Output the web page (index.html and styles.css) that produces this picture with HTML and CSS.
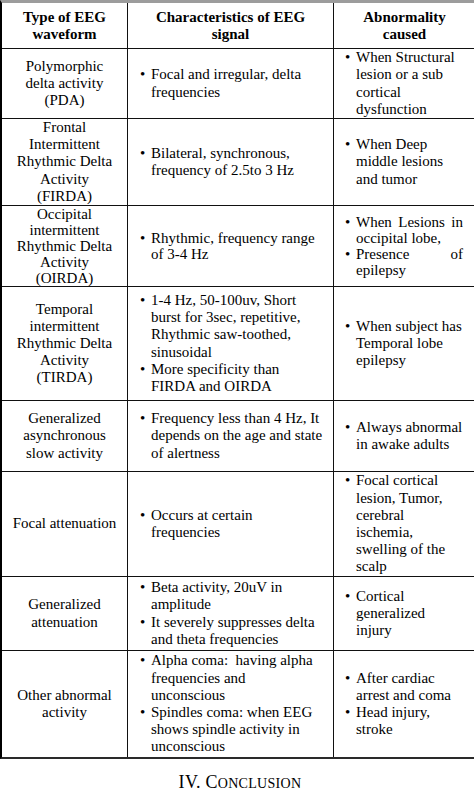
FILE: index.html
```html
<!DOCTYPE html>
<html lang="en">
<head>
<meta charset="utf-8">
<title>EEG waveforms</title>
<link rel="stylesheet" href="styles.css">
</head>
<body>
<table class="eeg">
  <colgroup>
    <col class="c-type">
    <col class="c-char">
    <col class="c-abn">
  </colgroup>
  <thead>
    <tr class="r-head">
      <th>Type of EEG<br>waveform</th>
      <th>Characteristics of EEG<br>signal</th>
      <th>Abnormality<br>caused</th>
    </tr>
  </thead>
  <tbody>
    <tr class="r1">
      <td class="type">Polymorphic<br>delta activity<br>(PDA)</td>
      <td class="char"><div class="item">Focal and irregular, delta<br>frequencies</div></td>
      <td class="abn"><div class="item">When Structural<br>lesion or a sub<br>cortical<br>dysfunction</div></td>
    </tr>
    <tr class="r2">
      <td class="type">Frontal<br>Intermittent<br>Rhythmic Delta<br>Activity<br>(FIRDA)</td>
      <td class="char"><div class="item">Bilateral, synchronous,<br>frequency of 2.5to 3 Hz</div></td>
      <td class="abn"><div class="item">When Deep<br>middle lesions<br>and tumor</div></td>
    </tr>
    <tr class="r3">
      <td class="type">Occipital<br>intermittent<br>Rhythmic Delta<br>Activity<br>(OIRDA)</td>
      <td class="char"><div class="item">Rhythmic, frequency range<br>of 3-4 Hz</div></td>
      <td class="abn justify"><div class="item">When Lesions in occipital lobe,</div><div class="item">Presence of epilepsy</div></td>
    </tr>
    <tr class="r4">
      <td class="type">Temporal<br>intermittent<br>Rhythmic Delta<br>Activity<br>(TIRDA)</td>
      <td class="char"><div class="item">1-4 Hz, 50-100uv, Short<br>burst for 3sec, repetitive,<br>Rhythmic saw-toothed,<br>sinusoidal</div><div class="item">More specificity than<br>FIRDA and OIRDA</div></td>
      <td class="abn"><div class="item">When subject has<br>Temporal lobe<br>epilepsy</div></td>
    </tr>
    <tr class="r5">
      <td class="type">Generalized<br>asynchronous<br>slow activity</td>
      <td class="char"><div class="item">Frequency less than 4 Hz, It<br>depends on the age and state<br>of alertness</div></td>
      <td class="abn"><div class="item">Always abnormal<br>in awake adults</div></td>
    </tr>
    <tr class="r6">
      <td class="type">Focal attenuation</td>
      <td class="char"><div class="item">Occurs at certain<br>frequencies</div></td>
      <td class="abn"><div class="item">Focal cortical<br>lesion, Tumor,<br>cerebral<br>ischemia,<br>swelling of the<br>scalp</div></td>
    </tr>
    <tr class="r7">
      <td class="type">Generalized<br>attenuation</td>
      <td class="char"><div class="item">Beta activity, 20uV in<br>amplitude</div><div class="item">It severely suppresses delta<br>and theta frequencies</div></td>
      <td class="abn"><div class="item">Cortical<br>generalized<br>injury</div></td>
    </tr>
    <tr class="r8">
      <td class="type">Other abnormal<br>activity</td>
      <td class="char"><div class="item">Alpha coma:&nbsp; having alpha<br>frequencies and<br>unconscious</div><div class="item">Spindles coma: when EEG<br>shows spindle activity in<br>unconscious</div></td>
      <td class="abn"><div class="item">After cardiac<br>arrest and coma</div><div class="item">Head injury,<br>stroke</div></td>
    </tr>
  </tbody>
</table>
<h2 class="conclusion">IV. C<span class="sc">onclusion</span></h2>
</body>
</html>
```

FILE: styles.css
```css
html, body {
  margin: 0;
  padding: 0;
  background: #fff;
  overflow: hidden;
}

body {
  width: 474px;
  font-family: "Liberation Serif", "Times New Roman", serif;
  font-size: 15px;
  line-height: 17.2px;
  color: #000;
}

.eeg {
  border-collapse: separate;
  border-spacing: 0;
  table-layout: fixed;
  width: 476px;
  border-top: 3px solid #9c9c9c;
  border-left: 2px solid #000;
  border-bottom: 2px solid #2a2a2a;
}

.c-type { width: 126px; }
.c-char { width: 206px; }
.c-abn  { width: 142px; }

.eeg th,
.eeg td {
  box-sizing: border-box;
  padding: 0;
  vertical-align: middle;
  border-right: 1px solid #111;
  border-bottom: 1px solid #111;
}

.eeg tbody tr:last-child td {
  border-bottom: none;
}

.eeg th {
  font-weight: bold;
  text-align: center;
  line-height: 16.3px;
}

.r-head { height: 46px; }
.r1 { height: 70px; }
.r2 { height: 87px; }
.r3 { height: 81px; line-height: 16px; }
.r4 { height: 114px; }
.r5 { height: 71px; }
.r6 { height: 105px; }
.r7 { height: 74px; }
.r8 { height: 106px; }

.eeg .type {
  text-align: center;
  padding: 0 2px;
}

.eeg .char {
  padding: 0 9px 0 12px;
}

.eeg .abn {
  padding: 0 12px 0 11px;
}

.item {
  display: grid;
  grid-template-columns: 11px 1fr;
}

.item::before {
  content: "\2022";
}

.justify .item {
  text-align: justify;
}

.conclusion {
  margin: 13px 0 0;
  padding-left: 6px;
  font-size: 18px;
  line-height: 20px;
  font-weight: normal;
  text-align: center;
  letter-spacing: 0.3px;
}

.conclusion .sc {
  font-size: 14px;
  text-transform: uppercase;
}
```
